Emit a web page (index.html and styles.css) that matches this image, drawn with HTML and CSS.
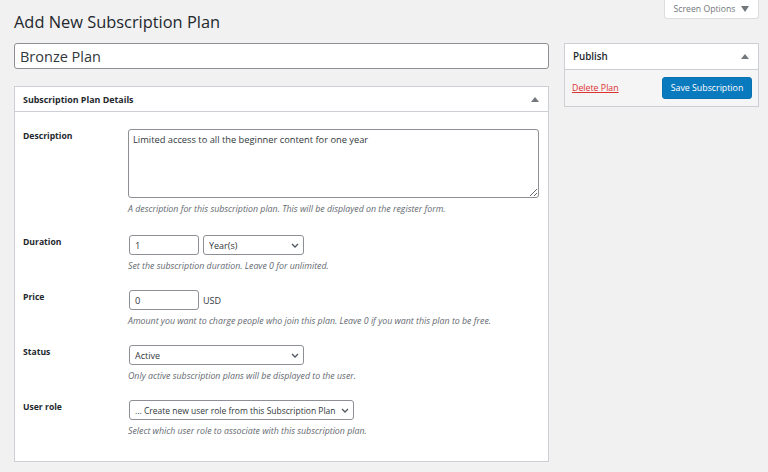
FILE: index.html
```html
<!DOCTYPE html>
<html lang="en">
<head>
    <meta charset="UTF-8">
    <meta name="viewport" content="width=device-width, initial-scale=1.0">
    <title>Add New Subscription Plan</title>
    <link rel="stylesheet" href="styles.css">
</head>
<body>
    <div class="wrap">
        <div class="top">
            <h1 class="page-title">Add New Subscription Plan</h1>
            <button class="screen-options">Screen Options
                <svg width="8" height="6" viewBox="0 0 8 6"><path d="M0 0h8L4 6z" fill="#72777c"/></svg>
            </button>
        </div>

        <div class="columns">
            <div class="main">
                <input class="title-input" type="text" value="Bronze Plan">

                <div class="postbox">
                    <div class="postbox-header">
                        <h2>Subscription Plan Details</h2>
                        <svg width="8" height="5" viewBox="0 0 8 5"><path d="M0 5h8L4 0z" fill="#72777c"/></svg>
                    </div>

                    <div class="postbox-body">
                        <div class="row row-description">
                            <label class="label">Description</label>
                            <div class="field">
                                <textarea class="textarea">Limited access to all the beginner content for one year</textarea>
                                <p class="help">A description for this subscription plan. This will be displayed on the register form.</p>
                            </div>
                        </div>

                        <div class="row">
                            <label class="label">Duration</label>
                            <div class="field">
                                <div class="inline">
                                    <input class="input small" type="text" value="1">
                                    <span class="select-wrap duration">
                                        <select class="select"><option>Year(s)</option></select>
                                        <svg class="chevron" width="8" height="5" viewBox="0 0 8 5"><path d="M1 1l3 3 3-3" fill="none" stroke="#50575e" stroke-width="1.3"/></svg>
                                    </span>
                                </div>
                                <p class="help">Set the subscription duration. Leave 0 for unlimited.</p>
                            </div>
                        </div>

                        <div class="row">
                            <label class="label">Price</label>
                            <div class="field">
                                <div class="inline">
                                    <input class="input small" type="text" value="0">
                                    <span class="currency">USD</span>
                                </div>
                                <p class="help">Amount you want to charge people who join this plan. Leave 0 if you want this plan to be free.</p>
                            </div>
                        </div>

                        <div class="row">
                            <label class="label">Status</label>
                            <div class="field">
                                <span class="select-wrap status">
                                    <select class="select"><option>Active</option></select>
                                    <svg class="chevron" width="8" height="5" viewBox="0 0 8 5"><path d="M1 1l3 3 3-3" fill="none" stroke="#50575e" stroke-width="1.3"/></svg>
                                </span>
                                <p class="help">Only active subscription plans will be displayed to the user.</p>
                            </div>
                        </div>

                        <div class="row">
                            <label class="label">User role</label>
                            <div class="field">
                                <span class="select-wrap role">
                                    <select class="select"><option>... Create new user role from this Subscription Plan</option></select>
                                    <svg class="chevron" width="8" height="5" viewBox="0 0 8 5"><path d="M1 1l3 3 3-3" fill="none" stroke="#50575e" stroke-width="1.3"/></svg>
                                </span>
                                <p class="help">Select which user role to associate with this subscription plan.</p>
                            </div>
                        </div>
                    </div>
                </div>
            </div>

            <div class="side">
                <div class="postbox publish">
                    <div class="postbox-header">
                        <h2>Publish</h2>
                        <svg width="8" height="5" viewBox="0 0 8 5"><path d="M0 5h8L4 0z" fill="#72777c"/></svg>
                    </div>
                    <div class="publish-actions">
                        <a class="delete-link" href="#">Delete Plan</a>
                        <button class="button-primary">Save Subscription</button>
                    </div>
                </div>
            </div>
        </div>
    </div>
</body>
</html>
```

FILE: styles.css
```css
*{
    margin: 0;
    padding: 0;
    box-sizing: border-box;
}

body{
    background-color: #f1f1f1;
    font-family: "Open Sans", "Noto Sans", sans-serif;
    color: #23282d;
}

.wrap{
    padding: 0 9px 0 14px;
}

.top{
    display: flex;
    justify-content: space-between;
    align-items: flex-start;
    height: 43px;
}

.page-title{
    font-size: 16.4px;
    font-weight: 400;
    margin-top: 10px;
    color: #23282d;
}

.screen-options{
    display: flex;
    align-items: center;
    gap: 6px;
    width: 95px;
    height: 19px;
    justify-content: center;
    background-color: #fff;
    border: 1px solid #ddd;
    border-top: none;
    border-radius: 0 0 3px 3px;
    font-family: inherit;
    font-size: 8.7px;
    color: #72777c;
}

.columns{
    display: flex;
    gap: 15px;
    align-items: flex-start;
}

.main{
    flex: 1;
}

.side{
    width: 195px;
}

.title-input{
    display: block;
    width: 100%;
    height: 26px;
    padding: 0 5px;
    border: 1px solid #8c8f94;
    border-radius: 3px;
    font-family: inherit;
    font-size: 14.5px;
    color: #32373c;
    margin-bottom: 17px;
}

.postbox{
    background-color: #fff;
    border: 1px solid #ccd0d4;
}

.postbox-header{
    display: flex;
    justify-content: space-between;
    align-items: center;
    height: 25px;
    padding: 0 9px 0 8px;
    border-bottom: 1px solid #ccd0d4;
}

.postbox-header h2{
    font-size: 8.9px;
    font-weight: 700;
}

.postbox-body{
    padding: 17px 8px 24px 8px;
}

.row{
    display: flex;
    margin-bottom: 18px;
}

.row-description{
    margin-bottom: 20px;
}

.row:last-child{
    margin-bottom: 0;
}

.label{
    width: 105px;
    flex-shrink: 0;
    font-size: 8.6px;
    font-weight: 700;
    line-height: 12px;
    padding-top: 1px;
}

.field{
    flex: 1;
    padding-right: 1px;
}

.textarea{
    display: block;
    width: 100%;
    height: 69px;
    padding: 3px 4px;
    border: 1px solid #8c8f94;
    border-radius: 3px;
    font-family: inherit;
    font-size: 9.3px;
    line-height: 14px;
    color: #32373c;
}

.help{
    margin-top: 6px;
    font-size: 8.8px;
    line-height: 11px;
    font-style: italic;
    color: #646970;
}

.inline{
    display: flex;
    align-items: center;
    gap: 4px;
    padding-left: 1px;
}

.input{
    height: 20px;
    border: 1px solid #8c8f94;
    border-radius: 3px;
    padding: 0 5px;
    font-family: inherit;
    font-size: 9.3px;
    color: #32373c;
}

.small{
    width: 70px;
}

.currency{
    font-size: 9px;
    color: #32373c;
}

.select-wrap{
    position: relative;
    display: block;
}

.select{
    display: block;
    width: 100%;
    height: 20px;
    -webkit-appearance: none;
    appearance: none;
    background-color: #fff;
    border: 1px solid #8c8f94;
    border-radius: 3px;
    padding: 0 14px 0 5px;
    font-family: inherit;
    font-size: 9px;
    color: #32373c;
}

.chevron{
    position: absolute;
    right: 5px;
    top: 8px;
}

.duration{
    width: 101px;
}

.status{
    width: 175px;
    margin-left: 1px;
}

.role{
    width: 225px;
    margin-left: 1px;
}

.role .select{
    font-size: 8.5px;
    padding: 0 12px 0 5px;
}

.publish .postbox-header{
    height: 26px;
    padding: 0 9px 0 8px;
}

.publish .postbox-header h2{
    font-size: 9.8px;
    font-weight: 600;
}

.publish-actions{
    display: flex;
    justify-content: space-between;
    align-items: center;
    padding: 7px 6px 7px 7px;
    background-color: #f5f5f5;
}

.delete-link{
    font-size: 8.8px;
    color: #dc3232;
}

.button-primary{
    width: 90px;
    height: 22px;
    background-color: #0a7abf;
    border: 1px solid #0872b2;
    border-radius: 3px;
    color: #fff;
    font-family: inherit;
    font-size: 8.8px;
}
```
